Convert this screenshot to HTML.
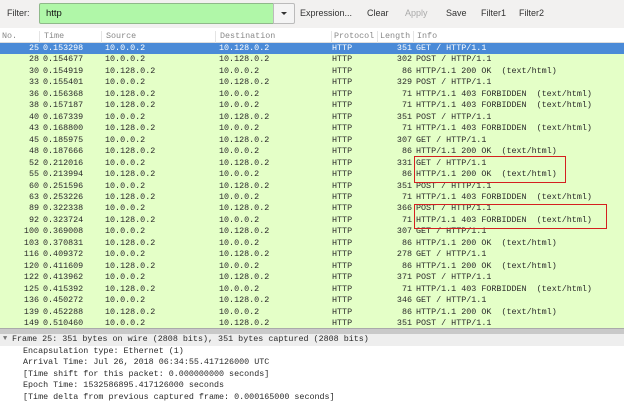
<!DOCTYPE html>
<html><head><style>
*{margin:0;padding:0;box-sizing:border-box}
body{width:624px;height:403px;overflow:hidden;background:#fff;position:relative;font-family:"Liberation Mono",monospace;font-size:8.4px;color:#2a2a2a}
.s{font-family:"Liberation Sans",sans-serif}
#top{position:absolute;left:0;top:0;width:624px;height:28px;background:#f2f1f0}
.lbl{position:absolute;top:8px;font-size:9px;color:#333}
#filt{position:absolute;left:39px;top:3px;width:235px;height:21px;background:#b0f7a8;border:1px solid #8fb98a;border-radius:2px 0 0 2px}
#filt span{position:absolute;left:6px;top:4px;font-size:9.5px;color:#111}
#dd{position:absolute;left:273px;top:3px;width:22px;height:21px;background:#f4f4f4;border:1px solid #bbb;border-radius:0 2px 2px 0}
#dd:after{content:"";position:absolute;left:7px;top:8px;border-left:3px solid transparent;border-right:3px solid transparent;border-top:3px solid #333}
#hdr{position:absolute;left:0;top:28px;width:624px;height:15px;background:#fff;border-bottom:1px solid #ddd;color:#888}
#hdr div{position:absolute;top:3px}
.sep{position:absolute;top:1px;width:1px;height:13px;background:#e4e4e4}
.row{position:absolute;left:0;width:624px;height:11.46px;background:#e4ffc7;line-height:11.46px}
.row div{position:absolute;top:0;white-space:pre}
.sel{background:#4a8ad7;color:#fff}
.c0{right:585px;text-align:right}
.c1{left:43px}.c2{left:105px}.c3{left:219px}.c4{left:332px}
.c5{right:212px;text-align:right}.c6{left:416px}
.box{position:absolute;border:1.3px solid #d42020}
#split{position:absolute;left:0;top:328px;width:624px;height:6px;background:#c9c9c9;border-top:1px solid #aaa}
#det{position:absolute;left:0;top:334px;width:624px;height:69px;background:#fff}
.dl{position:absolute;left:23px;white-space:pre;line-height:11.5px}
</style></head><body>
<div id="top">
<div class="lbl s" style="left:7px">Filter:</div>
<div id="filt"><span class="s">http</span></div>
<div id="dd"></div>
<div class="lbl s" style="left:300px">Expression...</div>
<div class="lbl s" style="left:367px">Clear</div>
<div class="lbl s" style="left:405px;color:#aaa">Apply</div>
<div class="lbl s" style="left:446px">Save</div>
<div class="lbl s" style="left:481px">Filter1</div>
<div class="lbl s" style="left:519px">Filter2</div>
</div>
<div id="hdr">
<div style="left:2px">No.</div><div class="sep" style="left:39px"></div>
<div style="left:44px">Time</div><div class="sep" style="left:101px"></div>
<div style="left:106px">Source</div><div class="sep" style="left:215px"></div>
<div style="left:220px">Destination</div><div class="sep" style="left:331px"></div>
<div style="left:334px">Protocol</div><div class="sep" style="left:377px"></div>
<div style="left:380px">Length</div><div class="sep" style="left:413px"></div>
<div style="left:417px">Info</div>
</div>
<div id="rows"></div>
<div class="box" style="left:414px;top:156px;width:152px;height:27px"></div>
<div class="box" style="left:414px;top:204px;width:193px;height:25px"></div>
<div id="split"></div>
<div id="det">
<div style="position:absolute;left:0;top:0;width:624px;height:12px;background:#eeeeee"></div>
<div class="dl" style="left:3px;top:0;color:#777;font-size:7px">&#9660;</div>
<div class="dl" style="left:12px;top:0">Frame 25: 351 bytes on wire (2808 bits), 351 bytes captured (2808 bits)</div>
<div class="dl" style="top:11.5px">Encapsulation type: Ethernet (1)</div>
<div class="dl" style="top:23px">Arrival Time: Jul 26, 2018 06:34:55.417126000 UTC</div>
<div class="dl" style="top:34.5px">[Time shift for this packet: 0.000000000 seconds]</div>
<div class="dl" style="top:46px">Epoch Time: 1532586895.417126000 seconds</div>
<div class="dl" style="top:57.5px">[Time delta from previous captured frame: 0.000165000 seconds]</div>
</div>
<script>
var A="10.0.0.2",B="10.128.0.2",G="GET / HTTP/1.1",P="POST / HTTP/1.1",O="HTTP/1.1 200 OK  (text/html)",F="HTTP/1.1 403 FORBIDDEN  (text/html)";
var d=[[25,"0.153298",A,B,351,G],[28,"0.154677",A,B,302,P],[30,"0.154919",B,A,86,O],[33,"0.155401",A,B,329,P],[36,"0.156368",B,A,71,F],[38,"0.157187",B,A,71,F],[40,"0.167339",A,B,351,P],[43,"0.168800",B,A,71,F],[45,"0.185975",A,B,307,G],[48,"0.187666",B,A,86,O],[52,"0.212016",A,B,331,G],[55,"0.213994",B,A,86,O],[60,"0.251596",A,B,351,P],[63,"0.253226",B,A,71,F],[89,"0.322338",A,B,366,P],[92,"0.323724",B,A,71,F],[100,"0.369008",A,B,307,G],[103,"0.370831",B,A,86,O],[116,"0.409372",A,B,278,G],[120,"0.411609",B,A,86,O],[122,"0.413962",A,B,371,P],[125,"0.415392",B,A,71,F],[136,"0.450272",A,B,346,G],[139,"0.452288",B,A,86,O],[149,"0.510460",A,B,351,P]];
var h="";d.forEach(function(r,i){var t=43+i*11.46;if(t>328)return;var hh=Math.min(11.46,328-t);
h+='<div class="row'+(i==0?' sel':'')+'" style="top:'+t+'px;height:'+hh+'px;overflow:hidden"><div class="c0">'+r[0]+'</div><div class="c1">'+r[1]+'</div><div class="c2">'+r[2]+'</div><div class="c3">'+r[3]+'</div><div class="c4">HTTP</div><div class="c5">'+r[4]+'</div><div class="c6">'+r[5]+'</div></div>';});
document.getElementById("rows").innerHTML=h;
</script>
</body></html>
